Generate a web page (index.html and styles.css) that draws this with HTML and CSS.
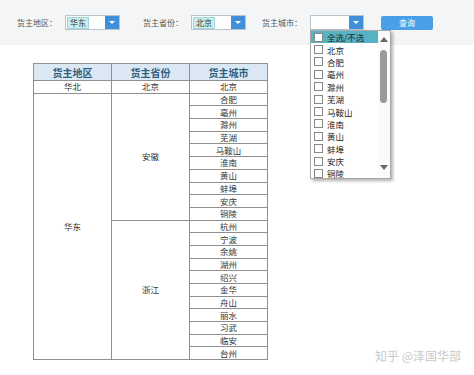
FILE: index.html
```html
<!DOCTYPE html>
<html lang="zh-CN">
<head>
<meta charset="UTF-8">
<title>货主城市</title>
<link rel="stylesheet" href="styles.css">
</head>
<body>

<div class="filter-bar">
    <div class="field field-region">
        <span class="field-label">货主地区：</span>
        <div class="select">
            <div class="select-value"><span class="chip">华东</span></div>
            <div class="select-arrow"></div>
        </div>
    </div>
    <div class="field field-province">
        <span class="field-label">货主省份：</span>
        <div class="select">
            <div class="select-value"><span class="chip">北京</span></div>
            <div class="select-arrow"></div>
        </div>
    </div>
    <div class="field field-city">
        <span class="field-label">货主城市：</span>
        <div class="select select-city">
            <div class="select-value"></div>
            <div class="select-arrow"></div>
            <!-- open dropdown -->
            <div class="dropdown">
                <ul class="dropdown-list">
                    <li class="dropdown-item active"><span class="check"></span>全选/不选</li>
                    <li class="dropdown-item"><span class="check"></span>北京</li>
                    <li class="dropdown-item"><span class="check"></span>合肥</li>
                    <li class="dropdown-item"><span class="check"></span>亳州</li>
                    <li class="dropdown-item"><span class="check"></span>滁州</li>
                    <li class="dropdown-item"><span class="check"></span>芜湖</li>
                    <li class="dropdown-item"><span class="check"></span>马鞍山</li>
                    <li class="dropdown-item"><span class="check"></span>淮南</li>
                    <li class="dropdown-item"><span class="check"></span>黄山</li>
                    <li class="dropdown-item"><span class="check"></span>蚌埠</li>
                    <li class="dropdown-item"><span class="check"></span>安庆</li>
                    <li class="dropdown-item"><span class="check"></span>铜陵</li>
                </ul>
                <div class="scrollbar">
                    <span class="scroll-up"></span>
                    <span class="scroll-thumb"></span>
                    <span class="scroll-down"></span>
                </div>
            </div>
        </div>
    </div>
    <button class="btn-query">查询</button>
</div>

<table class="city-table">
    <thead>
        <tr>
            <th>货主地区</th>
            <th>货主省份</th>
            <th>货主城市</th>
        </tr>
    </thead>
    <tbody>
        <tr><td>华北</td><td>北京</td><td>北京</td></tr>
        <tr><td rowspan="22">华东</td><td rowspan="10">安徽</td><td>合肥</td></tr>
        <tr><td>亳州</td></tr>
        <tr><td>滁州</td></tr>
        <tr><td>芜湖</td></tr>
        <tr><td>马鞍山</td></tr>
        <tr><td>淮南</td></tr>
        <tr><td>黄山</td></tr>
        <tr><td>蚌埠</td></tr>
        <tr><td>安庆</td></tr>
        <tr><td>铜陵</td></tr>
        <tr><td rowspan="12">浙江</td><td>杭州</td></tr>
        <tr><td>宁波</td></tr>
        <tr><td>余姚</td></tr>
        <tr><td>湖州</td></tr>
        <tr><td>绍兴</td></tr>
        <tr><td>金华</td></tr>
        <tr><td>舟山</td></tr>
        <tr><td>丽水</td></tr>
        <tr><td>习武</td></tr>
        <tr><td>临安</td></tr>
        <tr><td>台州</td></tr>
    </tbody>
</table>

<div class="watermark">知乎 @泽国华部</div>

</body>
</html>
```

FILE: styles.css
```css
body {
    margin: 0;
    padding: 0;
    background-color: #fff;
    font-family: "Noto Sans CJK SC", "Liberation Sans", sans-serif;
    color: #333;
}
.filter-bar {
    display: flex;
    align-items: center;
    height: 45px;
    padding-left: 17px;
    background-color: #f4f5f7;
}
.field {
    display: flex;
    align-items: center;
}
.field-region {
    margin-right: 23px;
}
.field-province {
    margin-right: 16px;
}
.field-city {
    margin-right: 17px;
}
.field-label {
    width: 48px;
    font-size: 8px;
    color: #555;
}
.select {
    position: relative;
    display: flex;
    width: 55px;
    height: 15px;
    box-sizing: border-box;
    border: 1px solid #b9c4cf;
    background-color: #fff;
}
.select-city {
    width: 54px;
}
.select-value {
    flex-grow: 1;
    display: flex;
    align-items: center;
    padding-left: 1px;
}
.chip {
    font-size: 8px;
    line-height: 10px;
    padding: 0 2px;
    background-color: #c9eef0;
    border: 1px solid #9fd6da;
    color: #333;
}
.select-arrow {
    position: relative;
    width: 14px;
    background-color: #3f8fdb;
}
.select-arrow::after {
    content: "";
    position: absolute;
    left: 4px;
    top: 5px;
    border-left: 3px solid transparent;
    border-right: 3px solid transparent;
    border-top: 3px solid #fff;
}
.btn-query {
    width: 52px;
    height: 14px;
    padding: 0;
    border: none;
    border-radius: 2px;
    background-color: #4aa0e6;
    color: #fff;
    font-family: inherit;
    font-size: 8px;
    line-height: 14px;
}
.dropdown {
    position: absolute;
    left: -1px;
    top: 14px;
    display: flex;
    width: 81px;
    height: 149px;
    box-sizing: border-box;
    border: 1px solid #a9a9a9;
    background-color: #fff;
    box-shadow: 2px 2px 3px rgba(0, 0, 0, 0.3);
    overflow: hidden;
    z-index: 10;
}
.dropdown-list {
    list-style: none;
    margin: 0;
    padding: 0;
    flex-grow: 1;
}
.dropdown-item {
    display: flex;
    align-items: center;
    height: 12.4px;
    font-size: 8.5px;
    color: #222;
}
.dropdown-item.active {
    background-color: #56b3c4;
}
.check {
    width: 7px;
    height: 7px;
    margin: 0 4px 0 3px;
    border: 1px solid #888;
    background-color: #fff;
}
.scrollbar {
    position: relative;
    width: 12px;
    background-color: #fafafa;
}
.scroll-up {
    position: absolute;
    left: 2px;
    top: 6px;
    border-left: 4px solid transparent;
    border-right: 4px solid transparent;
    border-bottom: 5px solid #666;
}
.scroll-thumb {
    position: absolute;
    left: 2px;
    top: 19px;
    width: 7px;
    height: 53px;
    border-radius: 4px;
    background-color: #9a9a9a;
}
.scroll-down {
    position: absolute;
    left: 2px;
    bottom: 8px;
    border-left: 4px solid transparent;
    border-right: 4px solid transparent;
    border-top: 5px solid #666;
}
.city-table {
    margin: 18px 0 0 33px;
    border-collapse: collapse;
    table-layout: fixed;
    width: 231px;
}
.city-table th,
.city-table td {
    border: 1px solid #8f8f8f;
    padding: 0;
    text-align: center;
    width: 77px;
}
.city-table th {
    height: 16px;
    background-color: #dbe8f3;
    color: #2f5f80;
    font-size: 10px;
    font-weight: bold;
}
.city-table td {
    height: 11.7px;
    font-size: 8.5px;
    line-height: 11px;
    color: #333;
}
.watermark {
    position: absolute;
    left: 375px;
    top: 347px;
    font-size: 12px;
    color: #c9c9c9;
}
```
